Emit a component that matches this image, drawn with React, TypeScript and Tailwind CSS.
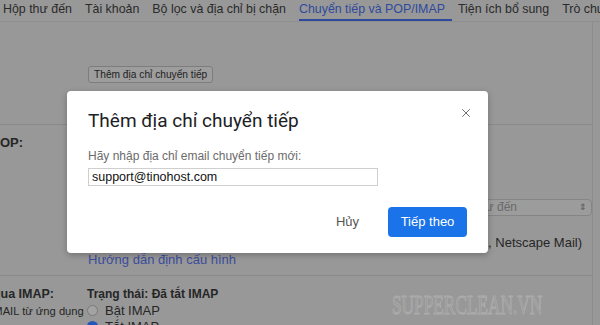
import { X } from 'lucide-react'

const TABS = [
  'Hộp thư đến',
  'Tài khoản',
  'Bộ lọc và địa chỉ bị chặn',
  'Chuyển tiếp và POP/IMAP',
  'Tiện ích bổ sung',
  'Trò chuyện và Meet',
]

function SettingsPage() {
  return (
    <div className="relative h-[325px] w-[600px] overflow-hidden bg-[#989898] font-['Liberation_Sans',Arial,sans-serif] text-[13px] text-[#262626]">
      {/* Tabs */}
      <div className="flex h-[22px] gap-[13px] whitespace-nowrap border-b border-[#8f8f8f] pl-[3px] text-[12.4px]">
        {TABS.map((t, i) => (
          <div
            key={t}
            className={`relative pt-[1px] leading-[16px] ${
              i === 3 ? 'text-[#2f4a9c]' : 'text-[#2a2a2a]'
            }`}
          >
            {t}
            {i === 3 && (
              <span className="absolute -right-[7px] left-0 top-[19px] h-[2px] bg-[#2f4a9c]" />
            )}
          </div>
        ))}
      </div>

      <div className="mr-[7px] border-r border-[#8c8c8c]">
        {/* Forwarding */}
        <div className="pl-[88px] pt-[42px]">
          <button
            type="button"
            className="h-[17px] rounded-[3px] border border-[#7d7d7d] bg-[#9d9d9d] px-[5px] text-[10.2px] leading-[15px] text-[#222]"
          >
            Thêm địa chỉ chuyển tiếp
          </button>
        </div>
        <div className="mt-[40px] border-t border-[#8a8a8a]" />

        {/* POP */}
        <div className="flex pt-[10px]">
          <div className="w-[88px] shrink-0 whitespace-nowrap font-bold leading-[16px]">
            OP:
          </div>
        </div>

        <div className="flex justify-end pt-[48px]">
          <div className="flex h-[17px] w-[300px] items-center rounded-[4px] border border-[#858585] bg-[#9c9c9c] pl-[6px] pr-[4px] text-[12px] text-[#6a6a6a]">
            <span className="flex-1 whitespace-nowrap pr-[62px] text-right">Hộp thư đến</span>
            <span className="text-[9px] leading-none text-[#555]">⇕</span>
          </div>
        </div>

        <div className="flex justify-end whitespace-nowrap pr-[10px] pt-[19px] leading-[16px]">
          Định cấu hình ứng dụng thư khách (ví dụ: Outlook, Eudora, Netscape Mail)
        </div>
        <div className="pl-[88px] pt-[1px] leading-[16px] text-[#3b4d9c]">
          Hướng dẫn định cấu hình
        </div>
        <div className="mt-[7px] border-t border-[#8a8a8a]" />

        {/* IMAP */}
        <div className="flex pt-[10px] leading-[16px]">
          <div className="-ml-[62px] w-[149px] shrink-0 overflow-hidden whitespace-nowrap">
            <div className="text-[12.5px] font-bold">Truy cập qua IMAP:</div>
            <div className="mt-[1px] text-[11.2px]">(truy cập GMAIL từ ứng dụng</div>
            <div className="text-[11.2px]">khách khác)</div>
          </div>
          <div>
            <div className="text-[12px] font-bold">Trạng thái: Đã tắt IMAP</div>
            <div className="mt-[1px] flex items-center gap-[7px]">
              <span className="h-[11px] w-[11px] rounded-full border border-[#7a7a7a] bg-[#a3a3a3]" />
              Bật IMAP
            </div>
            <div className="flex items-center gap-[7px]">
              <span className="flex h-[11px] w-[11px] items-center justify-center rounded-full bg-[#2456b8]">
                <span className="h-[4px] w-[4px] rounded-full bg-[#a3a3a3]" />
              </span>
              Tắt IMAP
            </div>
          </div>
        </div>
      </div>

      {/* Watermark */}
      <div className="absolute left-[392px] top-[285px] origin-left scale-x-[0.64] whitespace-nowrap font-['Liberation_Serif',serif] text-[27px] text-transparent [-webkit-text-stroke:1px_#adadad]">
        SUPPERCLEAN.VN
      </div>

      <ForwardDialog />
    </div>
  )
}

// ── Dialog ──

function ForwardDialog() {
  return (
    <div className="absolute left-[67px] top-[91px] h-[162px] w-[421px] rounded-[4px] bg-white shadow-[0_2px_6px_rgba(0,0,0,0.25)]">
      <button type="button" className="absolute right-[15px] top-[15px] text-[#666]">
        <X size={14} strokeWidth={1.6} />
      </button>
      <div className="px-[21px] pt-[17px]">
        <h2 className="font-['Roboto',sans-serif] text-[19px] font-normal leading-[26px] text-[#202124]">
          Thêm địa chỉ chuyển tiếp
        </h2>
        <p className="mt-[14px] text-[12px] leading-[16px] text-[#6b6b6b]">
          Hãy nhập địa chỉ email chuyển tiếp mới:
        </p>
        <input
          readOnly
          value="support@tinohost.com"
          className="mt-[4px] h-[18px] w-[290px] border border-[#cfcfcf] px-[3px] text-[12.5px] leading-[16px] text-[#111] outline-none"
        />
        <div className="mt-[20px] flex items-center justify-end gap-[29px]">
          <button type="button" className="text-[13px] text-[#555]">
            Hủy
          </button>
          <button
            type="button"
            className="h-[30px] w-[79px] rounded-[4px] bg-[#1a73e8] text-[13px] font-medium text-white"
          >
            Tiếp theo
          </button>
        </div>
      </div>
    </div>
  )
}

export default function App() {
  return <SettingsPage />
}
